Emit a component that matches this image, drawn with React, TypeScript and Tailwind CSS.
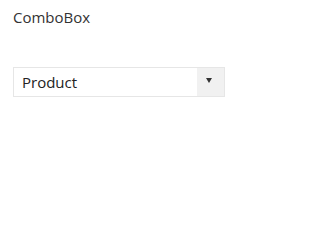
export default function App() {
  return (
    <div className="min-h-[240px] w-[237px] bg-white font-['Open_Sans',sans-serif] text-[#333]">
      <div className="px-[13px] pt-[6px] text-[15px] leading-[22px]">ComboBox</div>
      <div className="mx-[13px] mt-[39px] flex h-[30px] w-[212px] border border-[#e6e6e6] bg-white">
        <div className="flex flex-1 items-center pl-[8px] text-[15px] text-[#222]">Product</div>
        <div className="flex w-[27px] items-center justify-center bg-[#f1f1f1] pb-[3px] pr-[3px]">
          <svg width="6" height="5" viewBox="0 0 6 5">
            <path d="M0 0 L6 0 L3 5 Z" fill="#333" />
          </svg>
        </div>
      </div>
    </div>
  );
}
